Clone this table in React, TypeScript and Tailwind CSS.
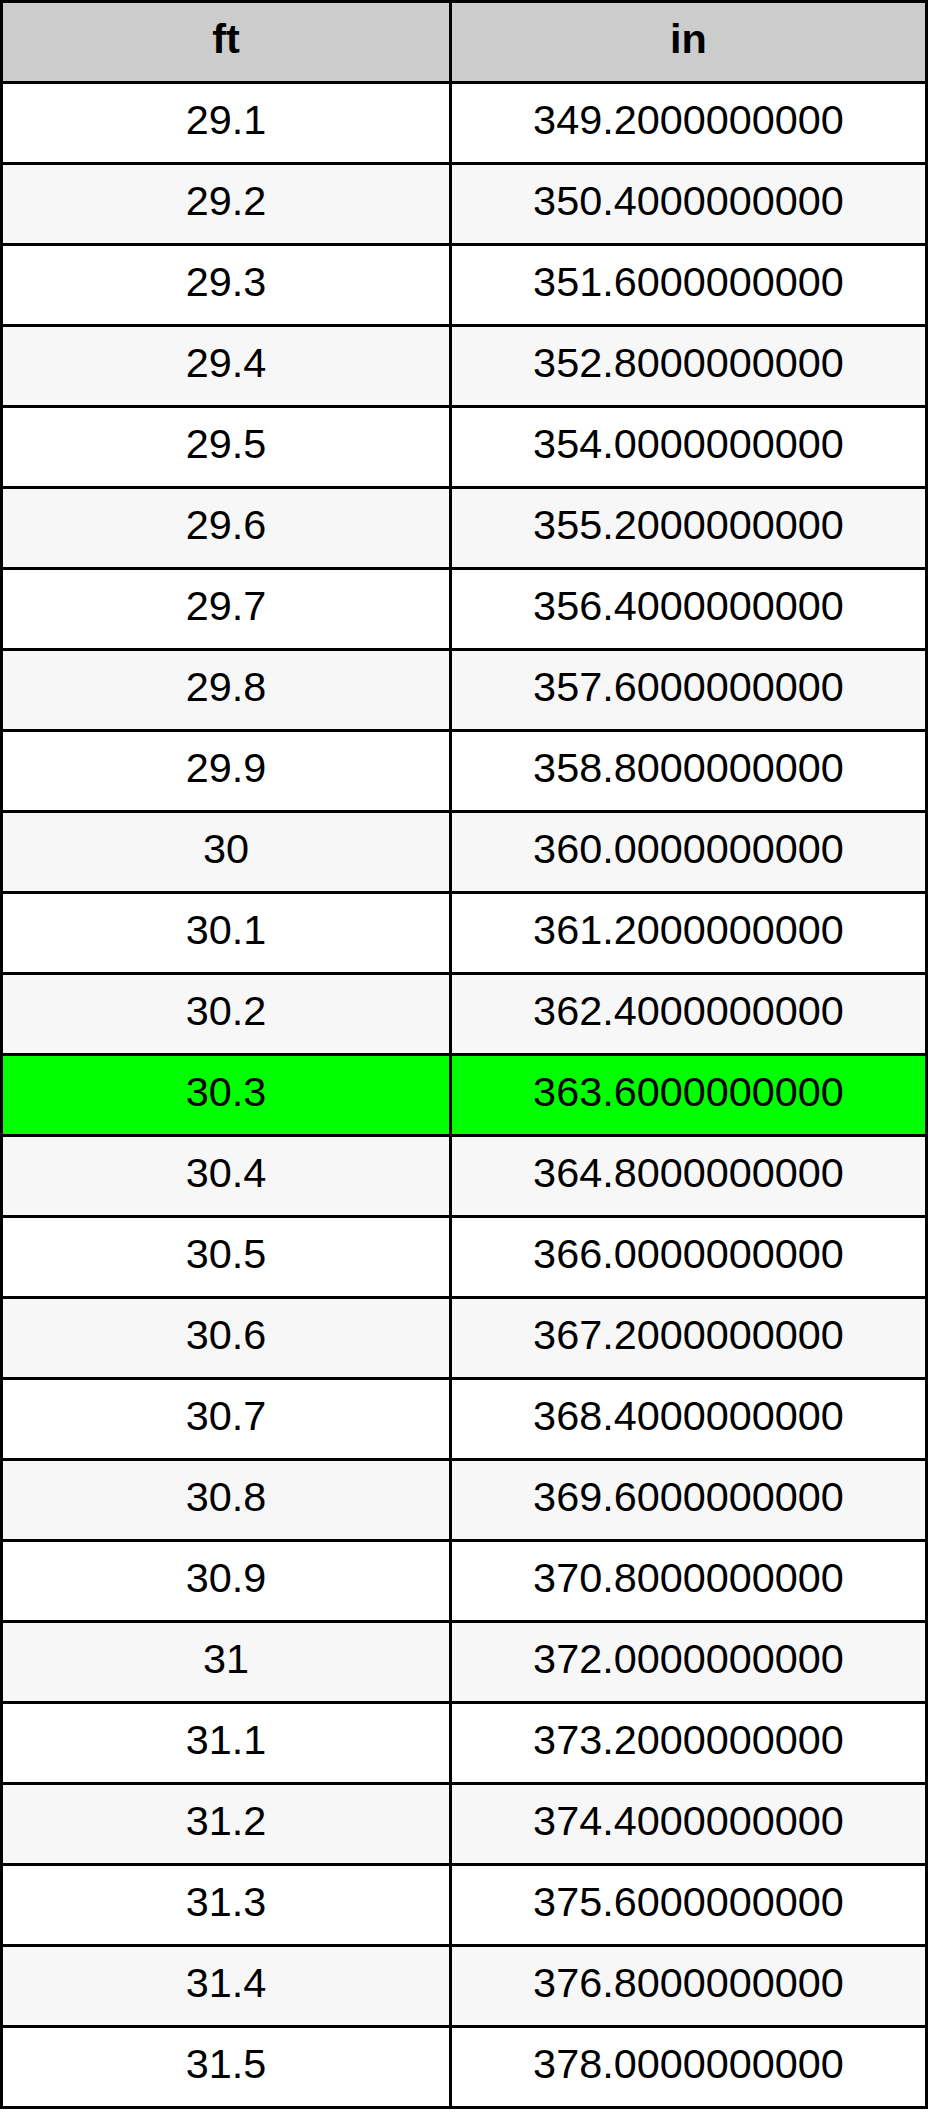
const rows: [string, string][] = [
  ["29.1", "349.2000000000"],
  ["29.2", "350.4000000000"],
  ["29.3", "351.6000000000"],
  ["29.4", "352.8000000000"],
  ["29.5", "354.0000000000"],
  ["29.6", "355.2000000000"],
  ["29.7", "356.4000000000"],
  ["29.8", "357.6000000000"],
  ["29.9", "358.8000000000"],
  ["30", "360.0000000000"],
  ["30.1", "361.2000000000"],
  ["30.2", "362.4000000000"],
  ["30.3", "363.6000000000"],
  ["30.4", "364.8000000000"],
  ["30.5", "366.0000000000"],
  ["30.6", "367.2000000000"],
  ["30.7", "368.4000000000"],
  ["30.8", "369.6000000000"],
  ["30.9", "370.8000000000"],
  ["31", "372.0000000000"],
  ["31.1", "373.2000000000"],
  ["31.2", "374.4000000000"],
  ["31.3", "375.6000000000"],
  ["31.4", "376.8000000000"],
  ["31.5", "378.0000000000"],
];

const cell = "h-[78px] pb-[4px] flex items-center justify-center text-[41.4px] leading-none text-black";

export default function App() {
  return (
    <div className="bg-white w-[930px] min-h-[2115px] font-['Liberation_Sans',Arial,sans-serif]">
      <div className="grid w-[928px] grid-cols-[446px_473px] gap-[3px] bg-black p-[3px]">
        <div className={`${cell} bg-[#cccccc] font-bold`}>ft</div>
        <div className={`${cell} bg-[#cccccc] font-bold`}>in</div>
        {rows.map(([ft, inch], i) => {
          const bg = ft === "30.3" ? "bg-[#00ff00]" : i % 2 === 1 ? "bg-[#f7f7f7]" : "bg-white";
          return [
            <div key={`a${i}`} className={`${cell} ${bg}`}>{ft}</div>,
            <div key={`b${i}`} className={`${cell} ${bg}`}>{inch}</div>,
          ];
        })}
      </div>
    </div>
  );
}
